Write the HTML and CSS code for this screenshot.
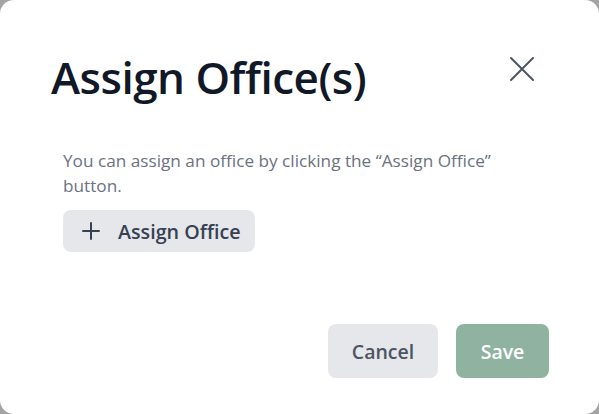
FILE: index.html
```html
<!DOCTYPE html>
<html lang="en">
  <head>
    <meta charset="UTF-8" />
    <meta name="viewport" content="width=device-width, initial-scale=1.0" />
    <title>Assign Office(s)</title>
    <link rel="stylesheet" href="styles.css">
  </head>
  <body>
    <div class="dialog">
      <div class="dialog-header">
        <h1>Assign Office(s)</h1>
        <button class="close-button" aria-label="Close">
          <svg width="26" height="26" viewBox="0 0 26 26" fill="none" stroke="#4b5563" stroke-width="2" stroke-linecap="round">
            <path d="M2 2 L24 24 M24 2 L2 24" />
          </svg>
        </button>
      </div>

      <div class="dialog-body">
        <p class="hint">You can assign an office by clicking the “Assign Office” button.</p>
        <button class="assign-button">
          <svg width="18" height="18" viewBox="0 0 18 18" fill="none" stroke="#374151" stroke-width="2" stroke-linecap="round">
            <path d="M9 1 V17 M1 9 H17" />
          </svg>
          <span>Assign Office</span>
        </button>
      </div>

      <div class="dialog-footer">
        <button class="btn btn-cancel">Cancel</button>
        <button class="btn btn-save">Save</button>
      </div>
    </div>
  </body>
</html>
```

FILE: styles.css
```css
body {
  margin: 0;
  background-color: #a3a3a3;
  font-family: "Open Sans", "Noto Sans", sans-serif;
}

.dialog {
  width: 599px;
  height: 414px;
  box-sizing: border-box;
  background: white;
  border-radius: 14px;
  padding: 50px 50px 36px 51px;
  display: flex;
  flex-direction: column;
}

.dialog-header {
  display: flex;
  justify-content: space-between;
  align-items: flex-start;
}

h1 {
  margin: 0;
  font-size: 44px;
  font-weight: 600;
  line-height: 54px;
  color: #111827;
  letter-spacing: -0.5px;
}

.close-button {
  background: none;
  border: none;
  padding: 0;
  margin-top: 6px;
  margin-right: 14px;
  cursor: pointer;
}

.dialog-body {
  padding-left: 12px;
  margin-top: 44px;
}

.hint {
  margin: 0;
  max-width: 460px;
  font-size: 17.2px;
  line-height: 25px;
  color: #6b7280;
}

.assign-button {
  margin-top: 12px;
  display: inline-flex;
  align-items: center;
  gap: 18px;
  height: 42px;
  padding: 0 14px 0 19px;
  border: none;
  border-radius: 8px;
  background-color: #e5e7eb;
  color: #374151;
  font-family: inherit;
  font-size: 19.7px;
  font-weight: 600;
  cursor: pointer;
}

.dialog-footer {
  margin-top: auto;
  display: flex;
  justify-content: flex-end;
  gap: 18px;
}

.btn {
  height: 54px;
  border: none;
  border-radius: 8px;
  font-family: inherit;
  font-size: 19.5px;
  font-weight: 600;
  cursor: pointer;
}

.btn-cancel {
  width: 110px;
  background-color: #e5e7eb;
  color: #4b5563;
}

.btn-save {
  width: 93px;
  background-color: #8fb3a0;
  color: white;
}
```
